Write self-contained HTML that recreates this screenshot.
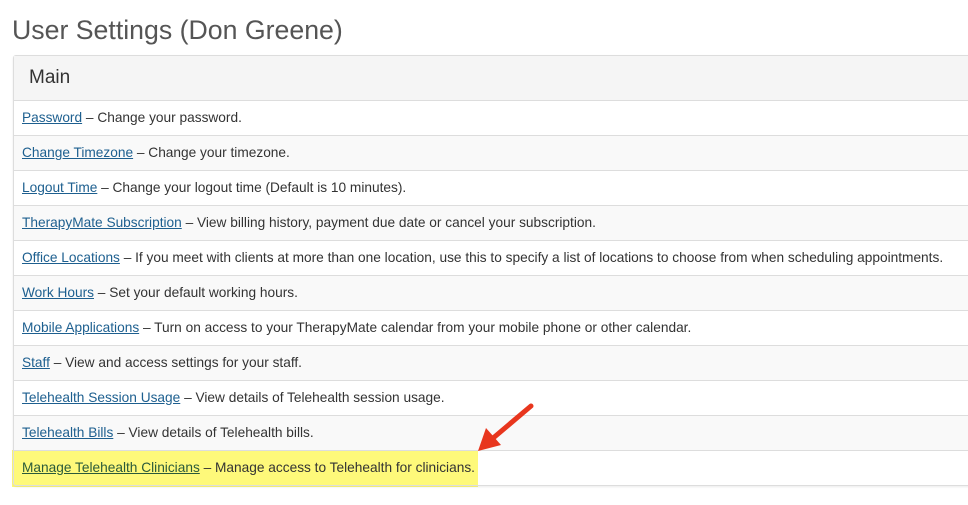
<!DOCTYPE html>
<html><head><style>
body{margin:0;width:968px;height:505px;background:#fff;font-family:"Liberation Sans",sans-serif;overflow:hidden;position:relative}
h1{position:absolute;left:12px;top:10px;margin:0;font-weight:normal;font-size:26.7px;color:#555;line-height:40px}
.panel{position:absolute;left:13px;top:55px;width:970px;border:1px solid #ddd;border-radius:3px;box-shadow:0 1px 2px rgba(0,0,0,.08)}
.hd{height:44px;background:#f5f5f5;border-bottom:1px solid #ddd;font-size:19px;line-height:44px;padding-left:15px;color:#333}
.row{height:34px;line-height:34px;border-top:1px solid #ddd;padding-left:8px;font-size:13.7px;color:#333}
.row:nth-child(odd){background:#f9f9f9}
a{color:#1d5f8f;text-decoration:underline}
.hl{position:absolute;left:12px;top:450px;width:466px;height:37px;background:#fef97a}
.row.last{background:transparent;position:relative;z-index:2}
</style></head><body>
<h1>User Settings (Don Greene)</h1>
<div class="hl"></div>
<div class="panel">
<div class="hd">Main</div>
<div class="row" style="border-top:none"><a>Password</a> – Change your password.</div>
<div class="row"><a>Change Timezone</a> – Change your timezone.</div>
<div class="row"><a>Logout Time</a> – Change your logout time (Default is 10 minutes).</div>
<div class="row"><a>TherapyMate Subscription</a> – View billing history, payment due date or cancel your subscription.</div>
<div class="row"><a>Office Locations</a> – If you meet with clients at more than one location, use this to specify a list of locations to choose from when scheduling appointments.</div>
<div class="row"><a>Work Hours</a> – Set your default working hours.</div>
<div class="row"><a>Mobile Applications</a> – Turn on access to your TherapyMate calendar from your mobile phone or other calendar.</div>
<div class="row"><a>Staff</a> – View and access settings for your staff.</div>
<div class="row"><a>Telehealth Session Usage</a> – View details of Telehealth session usage.</div>
<div class="row"><a>Telehealth Bills</a> – View details of Telehealth bills.</div>
<div class="row last"><a style="color:#2a5a3a">Manage Telehealth Clinicians</a> – Manage access to Telehealth for clinicians.</div>
</div>
<svg style="position:absolute;left:0;top:0;z-index:3" width="968" height="505">
<line x1="531" y1="406" x2="492" y2="439" stroke="#e8361e" stroke-width="5" stroke-linecap="round"/>
<polygon points="478,451 486,428 501,445" fill="#e8361e"/>
</svg>
</body></html>
